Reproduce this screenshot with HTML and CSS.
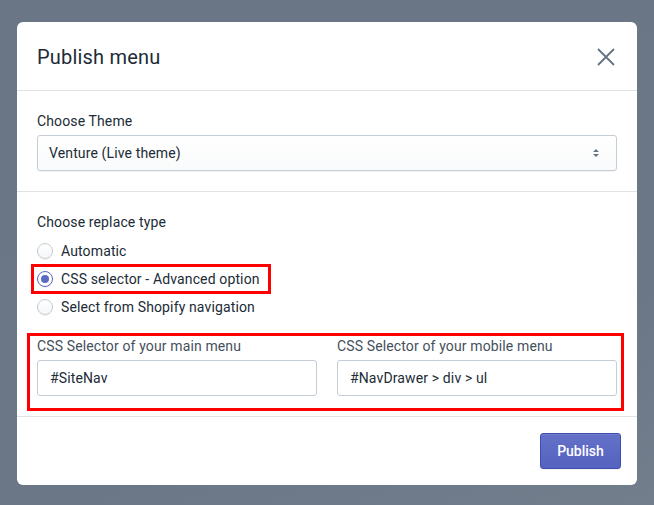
FILE: index.html
```html
<!DOCTYPE html>
<html lang="en">
<head>
    <meta charset="UTF-8">
    <meta name="viewport" content="width=device-width, initial-scale=1.0">
    <title>Publish menu</title>
    <link rel="stylesheet" href="styles.css">
</head>
<body>
    <div class="modal">
        <div class="modal-header">
            <h2>Publish menu</h2>
            <button class="close-btn" aria-label="Close">
                <svg width="20" height="20" viewBox="0 0 20 20">
                    <path d="M2 2 L18 18 M18 2 L2 18" stroke="#637381" stroke-width="1.8" fill="none"/>
                </svg>
            </button>
        </div>

        <div class="section">
            <label class="field-label">Choose Theme</label>
            <div class="select">
                <span>Venture (Live theme)</span>
                <svg width="8" height="12" viewBox="0 0 8 12">
                    <path d="M4 2 L7 5 H1 Z M4 10 L1 7 H7 Z" fill="#637381"/>
                </svg>
            </div>
        </div>

        <div class="section section-type">
            <label class="field-label">Choose replace type</label>
            <div class="radios">
                <label class="radio-row"><span class="radio"></span>Automatic</label>
                <label class="radio-row marked"><span class="radio checked"></span>CSS selector - Advanced option</label>
                <label class="radio-row"><span class="radio"></span>Select from Shopify navigation</label>
            </div>

            <div class="selectors">
                <div class="field">
                    <label class="field-label">CSS Selector of your main menu</label>
                    <div class="input">#SiteNav</div>
                </div>
                <div class="field">
                    <label class="field-label">CSS Selector of your mobile menu</label>
                    <div class="input">#NavDrawer &gt; div &gt; ul</div>
                </div>
            </div>
        </div>

        <div class="modal-footer">
            <button class="publish-btn">Publish</button>
        </div>
    </div>
</body>
</html>
```

FILE: styles.css
```css
body {
    margin: 0;
    height: 505px;
    background: linear-gradient(160deg, #6a7686 0%, #6b7787 70%, #727e8c 100%);
    font-family: Roboto, "Noto Sans", sans-serif;
    color: #212b36;
    padding: 22px 17px 0;
    box-sizing: border-box;
    letter-spacing: 0.13px;
}
.modal {
    width: 620px;
    background: #fff;
    border-radius: 6px;
    overflow: hidden;
}
.modal-header {
    height: 68px;
    display: flex;
    align-items: center;
    justify-content: space-between;
    padding: 0 20px;
    border-bottom: 1px solid #dfe3e8;
}
.modal-header h2 {
    margin: 0;
    font-size: 20px;
    font-weight: 400;
    line-height: 24px;
    margin-top: 2px;
    letter-spacing: 0.2px;
}
.close-btn {
    background: none;
    border: 0;
    padding: 0;
    width: 20px;
    height: 20px;
    margin-right: 1px;
    margin-top: 2px;
    cursor: pointer;
}
.close-btn svg {
    display: block;
}
.section {
    padding: 20px 20px 20px;
    border-bottom: 1px solid #dfe3e8;
}
.section-type {
    padding-bottom: 5px;
}
.field-label {
    display: block;
    font-size: 14px;
    line-height: 20px;
    margin-bottom: 4px;
}
.select {
    height: 36px;
    box-sizing: border-box;
    border: 1px solid #c4cdd5;
    border-radius: 3px;
    background: linear-gradient(#fff, #f9fafb);
    box-shadow: 0 1px 0 rgba(22, 29, 37, 0.05);
    display: flex;
    align-items: center;
    justify-content: space-between;
    padding: 0 16px 0 11px;
    font-size: 14px;
}
.radios {
    margin-top: 5px;
    margin-bottom: 12px;
}
.radio-row {
    height: 28px;
    display: flex;
    align-items: center;
    gap: 8px;
    font-size: 14px;
    position: relative;
}
.radio-row.marked::after {
    content: "";
    position: absolute;
    top: -1px;
    left: -6px;
    width: 240px;
    height: 30px;
    box-sizing: border-box;
    border: 3px solid #f00;
}
.radio {
    width: 16px;
    height: 16px;
    box-sizing: border-box;
    border: 1px solid #c4cdd5;
    border-radius: 50%;
    background: linear-gradient(#fff, #f4f6f8);
    box-shadow: 0 1px 0 rgba(22, 29, 37, 0.05);
    position: relative;
}
.radio.checked {
    border-color: #5c6ac4;
    background: #fff;
}
.radio.checked::before {
    content: "";
    position: absolute;
    top: 3px;
    left: 3px;
    width: 8px;
    height: 8px;
    border-radius: 50%;
    background: #5c6ac4;
}
.selectors {
    display: grid;
    grid-template-columns: 1fr 1fr;
    gap: 20px;
    margin: 0 -7px 0 -10px;
    padding: 0 4px 12px 7px;
    border: 3px solid #f00;
}
.field .field-label {
    margin-bottom: 4px;
    color: #454f5b;
}
.input {
    height: 36px;
    box-sizing: border-box;
    border: 1px solid #c4cdd5;
    border-radius: 3px;
    background: #fff;
    display: flex;
    align-items: center;
    padding: 0 12px;
    font-size: 14px;
}
.modal-footer {
    display: flex;
    justify-content: flex-end;
    padding: 16px;
}
.publish-btn {
    height: 36px;
    width: 81px;
    border: 1px solid #3f4eae;
    border-radius: 3px;
    background: linear-gradient(#6371c7, #5563c1);
    box-shadow: inset 0 1px 0 0 #6f7bcb, 0 1px 0 0 rgba(22, 29, 37, 0.05);
    color: #fff;
    font-family: Roboto, "Noto Sans", sans-serif;
    font-size: 14px;
    font-weight: 500;
    cursor: pointer;
}
```
